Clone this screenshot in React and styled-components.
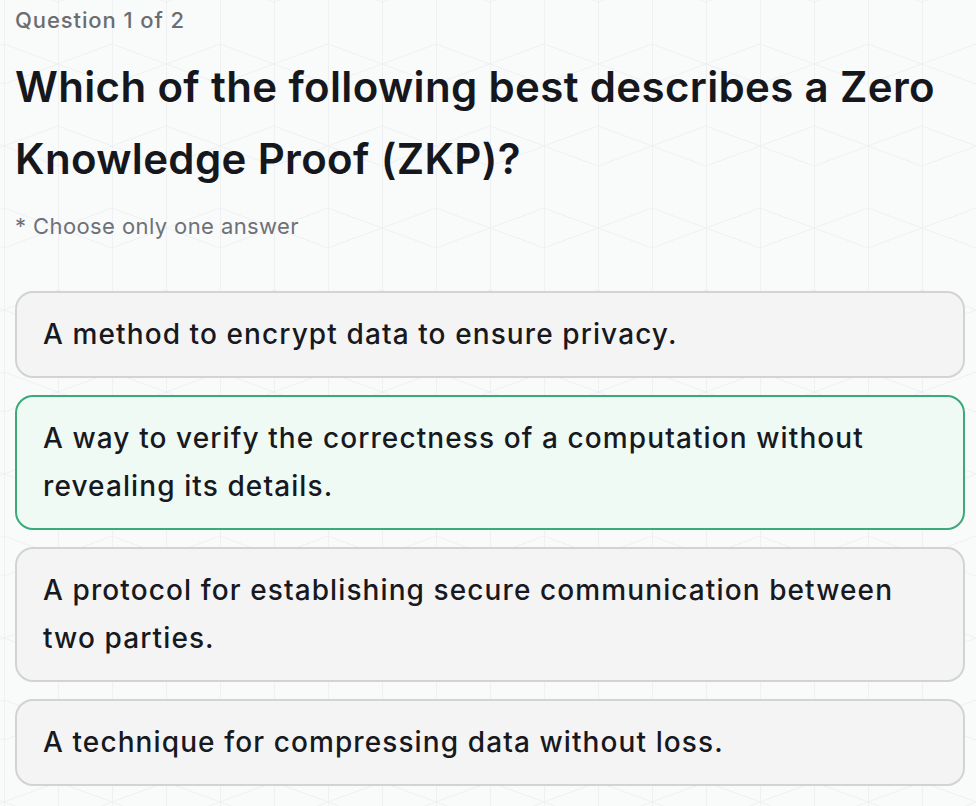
import React, { useState } from "react"
import styled, { createGlobalStyle } from "styled-components"

const pattern = encodeURIComponent(
  `<svg xmlns="http://www.w3.org/2000/svg" width="108" height="164" viewBox="0 0 108 164"><g fill="none" stroke="#eef0f1" stroke-width="1"><path d="M0.5 0V164M54.5 0V164"/><path d="M0 0L54 20L108 0M0 0L54 -20L108 0"/><path d="M0 164L54 184L108 164M0 164L54 144L108 164"/><path d="M-54 82L0 102L54 82L108 102L162 82M-54 82L0 62L54 82L108 62L162 82"/></g></svg>`
)

const GlobalStyle = createGlobalStyle`
  html, body {
    margin: 0;
    padding: 0;
    background-color: #f9fafa;
    background-image: url("data:image/svg+xml,${pattern}");
    background-position: 4px -18px;
    font-family: Inter, "Noto Sans", "Liberation Sans", sans-serif;
    -webkit-font-smoothing: antialiased;
  }
`

const Wrapper = styled.div`
  padding: 6px 11px 0 15px;
  display: flex;
  flex-direction: column;
`

const Counter = styled.div`
  font-size: 22px;
  line-height: 28px;
  font-weight: 500;
  letter-spacing: 0.9px;
  color: #6b6d71;
`

const Title = styled.h1`
  margin: 17px 0 0;
  font-size: 42px;
  line-height: 72px;
  font-weight: 600;
  color: #15171c;
  letter-spacing: 0.35px;
`

const Hint = styled.p`
  margin: 17px 0 0;
  font-size: 22px;
  line-height: 28px;
  letter-spacing: 0.4px;
  color: #6e7177;
`

const OptionList = styled.div`
  margin-top: 51px;
  display: flex;
  flex-direction: column;
  gap: 17px;
`

const Option = styled.button`
  display: block;
  width: 100%;
  text-align: left;
  padding: 17px 26px 18px;
  border-radius: 18px;
  border: 2px solid ${(p) => (p.$selected ? "#3ba97a" : "#d3d3d5")};
  background: ${(p) => (p.$selected ? "#effaf5" : "#f4f4f5")};
  font-family: inherit;
  font-size: 28px;
  line-height: 48px;
  font-weight: 500;
  letter-spacing: 1.1px;
  color: #17191e;
  cursor: pointer;
`

const answers = [
  "A method to encrypt data to ensure privacy.",
  "A way to verify the correctness of a computation without revealing its details.",
  "A protocol for establishing secure communication between two parties.",
  "A technique for compressing data without loss.",
]

export default function App() {
  const [picked, setPicked] = useState(1)

  return (
    <>
      <GlobalStyle />
      <Wrapper>
        <Counter>Question 1 of 2</Counter>
        <Title>Which of the following best describes a Zero Knowledge Proof (ZKP)?</Title>
        <Hint>* Choose only one answer</Hint>
        <OptionList>
          {answers.map((a, i) => (
            <Option key={i} $selected={picked === i} onClick={() => setPicked(i)}>
              {a}
            </Option>
          ))}
        </OptionList>
      </Wrapper>
    </>
  )
}
